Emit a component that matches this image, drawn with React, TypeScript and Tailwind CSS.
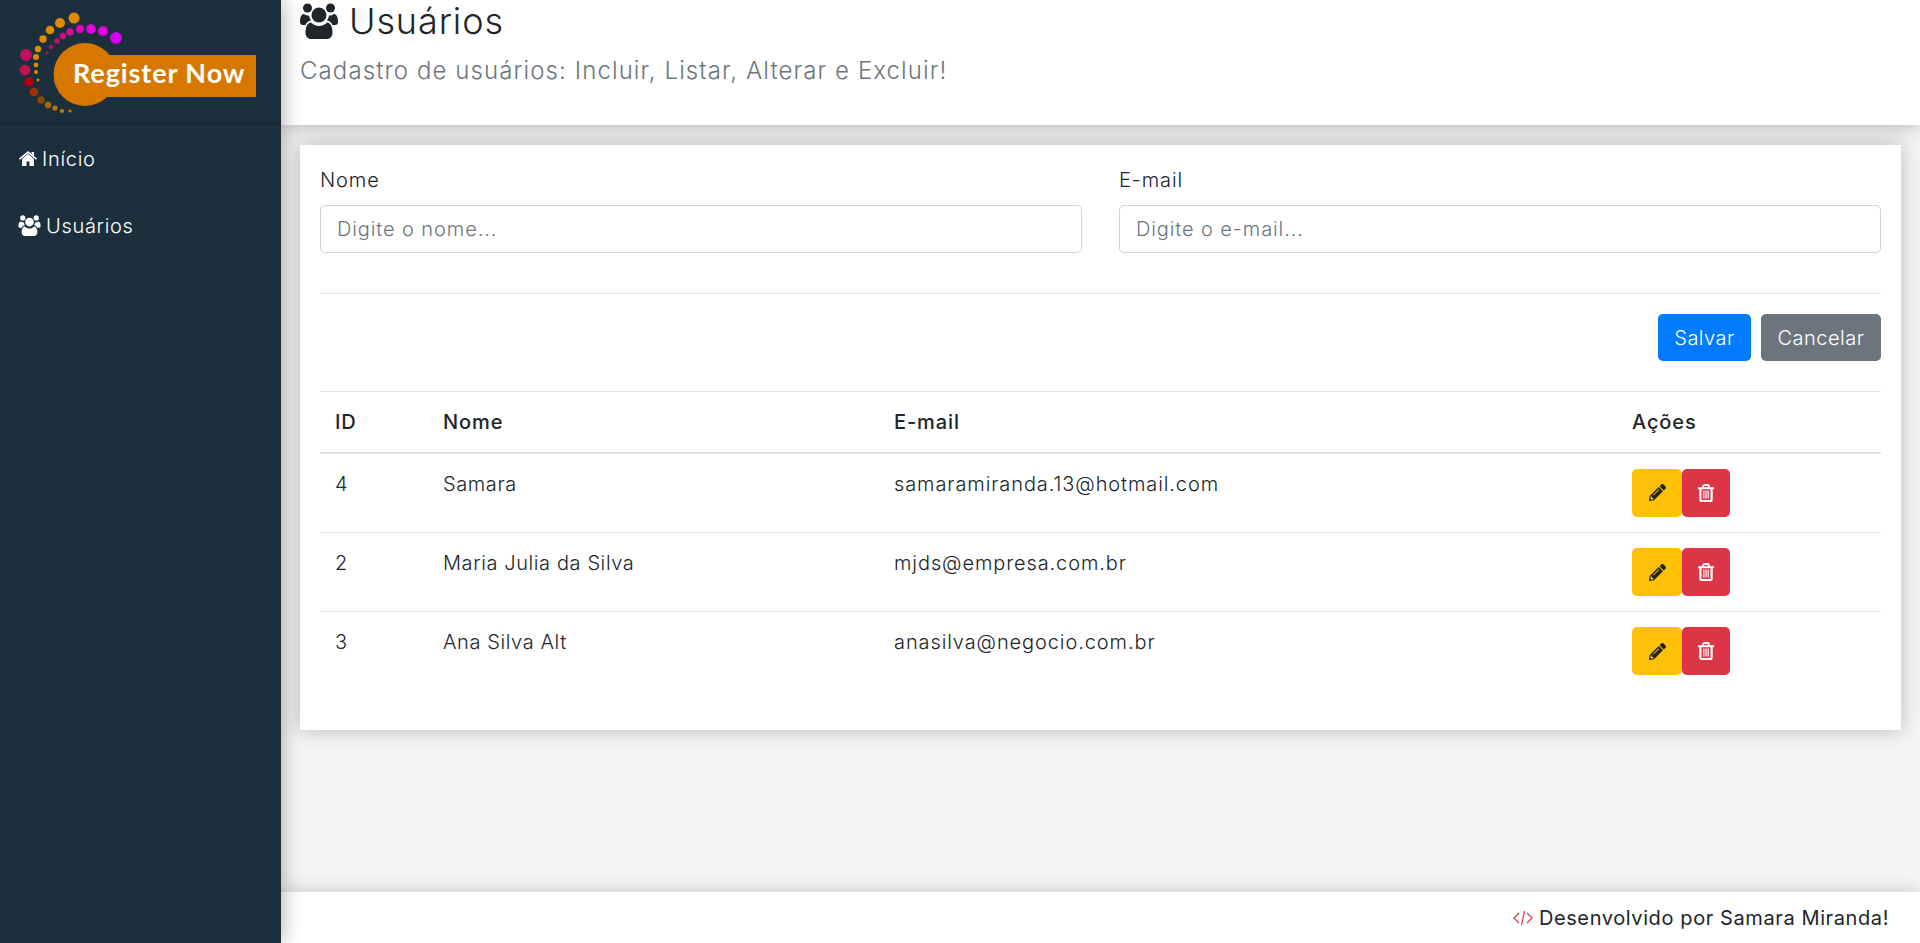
import { FaPencilAlt } from "react-icons/fa";

const users = [
  { id: 4, name: "Samara", email: "samaramiranda.13@hotmail.com" },
  { id: 2, name: "Maria Julia da Silva", email: "mjds@empresa.com.br" },
  { id: 3, name: "Ana Silva Alt", email: "anasilva@negocio.com.br" },
];

function UsersIcon({ className }: { className: string }) {
  return (
    <svg viewBox="0 0 38 36" className={className} fill="currentColor">
      <circle cx="19" cy="12" r="7.5" />
      <circle cx="7.5" cy="5" r="4.5" />
      <circle cx="30.5" cy="5" r="4.5" />
      <path d="M4 11c1.5 1 3 1.500 5 1.500.3 2 1 3.500 2 5-2.500.5-4.500 2-5.500 4.500H3c-2 0-3-1-3-3 0-4 1-8 4-8z" />
      <path d="M34 11c-1.500 1-3 1.500-5 1.500-.3 2-1 3.500-2 5 2.500.5 4.500 2 5.500 4.500H35c2 0 3-1 3-3 0-4-1-8-4-8z" />
      <path d="M11 19.500c2 2 5 3.500 8 3.500s6-1.500 8-3.500c4 .5 5.500 5 5.500 10 0 4-2.500 6.500-5.500 6.500H11c-3 0-5.500-2.500-5.500-6.500 0-5 1.500-9.500 5.500-10z" />
    </svg>
  );
}

function HomeIcon({ className }: { className: string }) {
  return (
    <svg viewBox="0 0 36 30" className={className} fill="currentColor">
      <path d="M18 6 6 16v12c0 1 .5 2 1.500 2H15v-9h6v9h7.500c1 0 1.500-1 1.500-2V16z" />
      <path d="M18 0 0 15l2 2.500L18 4.500l16 13 2-2.500-6-5V2h-5v4z" />
    </svg>
  );
}

function TrashIcon({ className }: { className: string }) {
  return (
    <svg viewBox="0 0 16 18" className={className} fill="none" stroke="currentColor">
      <path d="M0 4.200h16" strokeWidth="2" />
      <path d="M5 4V2.500C5 1.500 6 1 7 1h2c1 0 2 .5 2 1.500V4" strokeWidth="1.800" />
      <path d="M2.400 4v11.500c0 1 .6 1.700 1.600 1.700h8c1 0 1.600-.7 1.600-1.700V4" strokeWidth="2.200" />
      <path d="M5.800 6.500V14.500M8 6.500V14.500M10.200 6.500V14.500" strokeWidth="1.200" />
    </svg>
  );
}

function CodeIcon({ className }: { className: string }) {
  return (
    <svg viewBox="0 0 20 14" className={className} fill="none" stroke="currentColor" strokeWidth="1.2">
      <path d="M6 2 1 7l5 5M14 2l5 5-5 5M11.500 0 8.500 14" />
    </svg>
  );
}

function Logo() {
  const orange = [
    [74, 18, 5.5], [60, 23, 5], [50, 30, 4.3], [43, 39, 3.7], [38, 49, 3.2], [36, 57, 3], [36, 65, 2.4], [36, 72, 2],
    [38, 80, 1.5],
  ] as const;
  const pink = [
    [116, 38, 6, "#d400f5"], [103, 31, 5, "#e600e6"], [91, 29, 4.8, "#e800d8"], [80, 29, 4.2, "#e000c0"], [70, 32, 3.7, "#d0109a"],
    [63, 36, 3.2, "#c81080"], [57, 41, 2.7, "#c01070"], [51, 47, 2.2, "#b81060"], [47, 53, 1.5, "#b01058"],
  ] as const;
  const left = [
    [26, 55, 6, "#c4105c"], [25, 70, 5.3, "#c4104c"], [29, 82, 4.8, "#b00010"], [34, 92, 4.3, "#a03000"],
    [41, 100, 3.7, "#8c4800"], [48, 105, 3.2, "#a86a00"], [55, 108, 2.6, "#b87800"], [62, 111, 2.1, "#c08000"], [70, 111, 1.6, "#c88400"],
  ] as const;
  return (
    <svg viewBox="0 0 281 125" className="w-full h-full">
      {orange.map(([x, y, r], i) => (
        <circle key={i} cx={x} cy={y} r={r} fill="#e08a00" />
      ))}
      {pink.map(([x, y, r, c], i) => (
        <circle key={i} cx={x} cy={y} r={r} fill={c} />
      ))}
      {left.map(([x, y, r, c], i) => (
        <circle key={i} cx={x} cy={y} r={r} fill={c} />
      ))}
      <circle cx="85" cy="74.500" r="31.500" fill="#d67800" />
      <rect x="85" y="55" width="171" height="42" fill="#d67800" />
      <text x="73" y="83" fill="#fff" fontSize="27" fontWeight="700" letterSpacing="0.9" fontFamily="Lato, sans-serif">
        Register Now
      </text>
    </svg>
  );
}

export default function App() {
  return (
    <div className="relative flex h-[943px] overflow-hidden bg-[#f5f5f5] text-[#212529] font-['Inter',sans-serif]">
      {/* Sidebar */}
      <aside className="relative z-20 w-[281px] shrink-0 bg-[#1c2f3c] text-white shadow-[0_0_20px_rgba(0,0,0,0.35)]">
        <div className="h-[125px] shadow-[inset_0_-6px_8px_-4px_rgba(0,0,0,0.15)]">
          <Logo />
        </div>
        <nav className="text-[20px] font-light tracking-[0.7px]">
          <a className="flex h-[67px] items-center gap-[5px] pl-[19px]">
            <HomeIcon className="w-[18px] h-[15px]" />
            Início
          </a>
          <a className="flex h-[67px] items-center gap-[5px] pl-[18px]">
            <UsersIcon className="w-[23px] h-[21px]" />
            Usuários
          </a>
        </nav>
      </aside>

      <div className="flex flex-1 flex-col min-w-0">
        {/* Header */}
        <header className="relative z-10 h-[125px] shrink-0 bg-white pl-[19px] shadow-[0_0_20px_rgba(0,0,0,0.3)]">
          <h1 className="flex items-center gap-[11px] pt-[3px] text-[36px] leading-[36px] font-light tracking-[0.9px]">
            <UsersIcon className="w-[38px] h-[36px]" />
            Usuários
          </h1>
          <p className="mt-[17px] text-[24px] leading-[30px] font-light tracking-[1.1px] text-[#6c757d]">
            Cadastro de usuários: Incluir, Listar, Alterar e Excluir!
          </p>
        </header>

        {/* Content */}
        <main className="flex-1 px-[19px] pt-[20px]">
          <div className="h-[585px] bg-white px-[20px] pt-[23px] shadow-[0_0_20px_rgba(0,0,0,0.25)] tracking-[0.9px]">
            <div className="grid grid-cols-2 gap-[37px]">
              <label className="block">
                <span className="block text-[20px] leading-[24px] font-light mb-[13px]">Nome</span>
                <input
                  placeholder="Digite o nome..."
                  className="w-full h-[48px] rounded-[5px] border border-[#ced4da] px-4 text-[20px] font-light tracking-[0.9px] placeholder:text-[#6c757d]"
                />
              </label>
              <label className="block">
                <span className="block text-[20px] leading-[24px] font-light mb-[13px]">E-mail</span>
                <input
                  placeholder="Digite o e-mail..."
                  className="w-full h-[48px] rounded-[5px] border border-[#ced4da] px-4 text-[20px] font-light tracking-[0.9px] placeholder:text-[#6c757d]"
                />
              </label>
            </div>

            <hr className="mt-[40px] border-[#dee2e6]" />

            <div className="flex justify-end gap-[10px] mt-[20px]">
              <button className="h-[47px] w-[93px] rounded-[5px] bg-[#007bff] text-[20px] font-light tracking-[0.5px] text-white">Salvar</button>
              <button className="h-[47px] w-[120px] rounded-[5px] bg-[#6c757d] text-[20px] font-light tracking-[0.5px] text-white">Cancelar</button>
            </div>

            <table className="mt-[30px] w-full table-fixed text-[20px]">
              <thead>
                <tr className="h-[61px] border-t border-b-2 border-[#dee2e6] text-left">
                  <th className="w-[123px] pl-[15px] font-medium">ID</th>
                  <th className="w-[451px] font-medium">Nome</th>
                  <th className="w-[738px] font-medium">E-mail</th>
                  <th className="font-medium">Ações</th>
                </tr>
              </thead>
              <tbody className="font-light">
                {users.map((u, i) => (
                  <tr key={u.id} className={i > 0 ? "h-[79px] border-t border-[#dee2e6]" : "h-[80px]"}>
                    <td className="pl-[15px] align-top pt-[15px]">{u.id}</td>
                    <td className="align-top pt-[15px] tracking-[0.6px]">{u.name}</td>
                    <td className="align-top pt-[15px]">{u.email}</td>
                    <td className="align-top pt-[15px]">
                      <div className="flex">
                        <button className="flex h-[48px] w-[50px] items-center justify-center rounded-[5px] bg-[#ffc107] text-[#212529]">
                          <FaPencilAlt className="w-[17px] h-[17px]" />
                        </button>
                        <button className="flex h-[48px] w-[48px] items-center justify-center rounded-[5px] bg-[#dc3545] text-white">
                          <TrashIcon className="w-[16px] h-[18px]" />
                        </button>
                      </div>
                    </td>
                  </tr>
                ))}
              </tbody>
            </table>
          </div>
        </main>

        {/* Footer */}
        <footer className="relative z-10 flex h-[51px] shrink-0 items-center justify-end gap-[6px] bg-white pr-[31px] text-[20px] font-normal tracking-[0.6px] shadow-[0_0_20px_rgba(0,0,0,0.2)]">
          <CodeIcon className="w-[20px] h-[14px] text-[#dc3545]" />
          Desenvolvido por Samara Miranda!
        </footer>
      </div>
    </div>
  );
}
